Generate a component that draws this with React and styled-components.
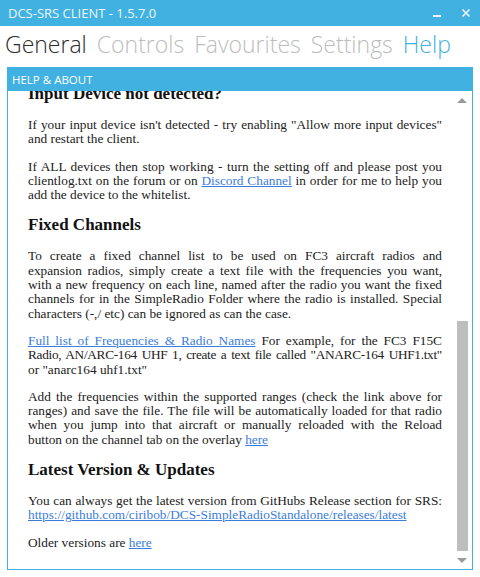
import { useLayoutEffect, useRef } from "react";
import styled, { createGlobalStyle } from "styled-components";

const ACCENT = "#41b1e1";

const GlobalStyle = createGlobalStyle`
  html, body {
    margin: 0;
    padding: 0;
    background: #fff;
  }
  * {
    box-sizing: border-box;
  }
`;

export default function App() {
  const viewRef = useRef(null);

  useLayoutEffect(() => {
    if (viewRef.current) viewRef.current.scrollTop = 17;
  }, []);

  return (
    <Window>
      <GlobalStyle />
      <TitleBar>
        <Title>DCS-SRS CLIENT - 1.5.7.0</Title>
        <WinButtons>
          <WinButton aria-label="minimize">
            <svg width="10" height="10" viewBox="0 0 10 10">
              <rect x="1" y="7" width="8" height="2" fill="#fff" />
            </svg>
          </WinButton>
          <WinButton aria-label="close">
            <svg width="10" height="10" viewBox="0 0 10 10">
              <path d="M1.5 1.5 L8.5 8.5 M8.5 1.5 L1.5 8.5" stroke="#fff" strokeWidth="1.6" />
            </svg>
          </WinButton>
        </WinButtons>
      </TitleBar>

      <Tabs>
        <Tab $state="active">General</Tab>
        <Tab>Controls</Tab>
        <Tab>Favourites</Tab>
        <Tab>Settings</Tab>
        <Tab $state="hover">Help</Tab>
      </Tabs>

      <Panel>
        <PanelHeader>HELP &amp; ABOUT</PanelHeader>
        <PanelBody>
          <Viewport ref={viewRef}>
            <Doc>
              <H>Input Device not detected?</H>
              <P>
                If your input device isn't detected - try enabling "Allow more input devices" and
                restart the client.
              </P>
              <P>
                If ALL devices then stop working - turn the setting off and please post you
                clientlog.txt on the forum or on <A>Discord Channel</A> in order for me to help you
                add the device to the whitelist.
              </P>

              <H>Fixed Channels</H>
              <P>
                <Line>To create a fixed channel list to be used on FC3 aircraft radios and</Line>
                <Line>expansion radios, simply create a text file with the frequencies you want,</Line>
                <Line>with a new frequency on each line, named after the radio you want the fixed</Line>
                <Line>channels for in the SimpleRadio Folder where the radio is installed. Special</Line>
                characters (-,/ etc) can be ignored as can the case.
              </P>
              <P>
                <Line>
                  <A>Full list of Frequencies &amp; Radio Names</A> For example, for the FC3 F15C
                </Line>
                <Line $squeeze>
                  Radio, AN/ARC-164 UHF 1, create a text file called "ANARC-164 UHF1.txt"
                </Line>
                or "anarc164 uhf1.txt"
              </P>
              <P>
                <Line>Add the frequencies within the supported ranges (check the link above for</Line>
                <Line>ranges) and save the file. The file will be automatically loaded for that radio</Line>
                <Line>when you jump into that aircraft or manually reloaded with the Reload</Line>
                button on the channel tab on the overlay <A>here</A>
              </P>

              <H>Latest Version &amp; Updates</H>
              <P>
                You can always get the latest version from GitHubs Release section for SRS:{" "}
                <A $nowrap>https://github.com/ciribob/DCS-SimpleRadioStandalone/releases/latest</A>
              </P>
              <P>
                Older versions are <A>here</A>
              </P>
            </Doc>
          </Viewport>

          <ScrollBar>
            <Arrow $dir="up" />
            <Track>
              <TrackGap style={{ flexGrow: 212 }} />
              <Thumb style={{ flexGrow: 231 }} />
            </Track>
            <Arrow $dir="down" />
          </ScrollBar>
        </PanelBody>
      </Panel>
    </Window>
  );
}

const Window = styled.div`
  width: 480px;
  height: 577px;
  display: flex;
  flex-direction: column;
  background: #fff;
  overflow: hidden;
`;

const TitleBar = styled.div`
  height: 26px;
  flex-shrink: 0;
  display: flex;
  align-items: center;
  justify-content: space-between;
  background: ${ACCENT};
  padding: 0 0 0 8px;
`;

const Title = styled.div`
  font-family: "Open Sans", "Noto Sans", sans-serif;
  font-size: 13px;
  color: #eaf6fc;
`;

const WinButtons = styled.div`
  display: flex;
  height: 100%;
`;

const WinButton = styled.div`
  width: 29px;
  height: 100%;
  display: flex;
  align-items: center;
  justify-content: center;
  opacity: 0.9;
`;

const Tabs = styled.div`
  display: flex;
  gap: 10px;
  padding: 2px 0 0 5px;
  height: 41px;
  flex-shrink: 0;
`;

const Tab = styled.div`
  font-family: "Open Sans", "Noto Sans", sans-serif;
  font-weight: 300;
  font-size: 23px;
  line-height: 32px;
  color: ${({ $state }) =>
    $state === "active" ? "#2b2b2b" : $state === "hover" ? ACCENT : "#bdbdbd"};
`;

const Panel = styled.div`
  margin: 0 7px 7px 7px;
  height: 503px;
  border: 1px solid ${ACCENT};
  display: flex;
  flex-direction: column;
`;

const PanelHeader = styled.div`
  height: 23px;
  flex-shrink: 0;
  background: ${ACCENT};
  color: #fff;
  font-family: "Open Sans", "Noto Sans", sans-serif;
  font-size: 11.5px;
  line-height: 23px;
  padding-left: 4px;
`;

const PanelBody = styled.div`
  flex: 1;
  min-height: 0;
  display: flex;
`;

const Viewport = styled.div`
  flex: 1;
  min-width: 0;
  overflow: hidden;
`;

const Doc = styled.div`
  padding: 10px 12px 20px 20px;
  font-family: "Liberation Serif", "DejaVu Serif", serif;
  font-size: 13.3px;
  line-height: 14.3px;
  color: #222;
  text-align: justify;
`;

const H = styled.h3`
  margin: 13px 0 14px;
  font-size: 17px;
  line-height: 20px;
  font-weight: bold;
  color: #111;
  text-align: left;

  &:first-child {
    margin-top: 0;
  }
`;

const P = styled.p`
  margin: 0 0 13px;
`;

/* a full, justified line of a wrapped paragraph */
const Line = styled.span`
  display: block;
  text-align: justify;
  text-align-last: justify;
  letter-spacing: ${({ $squeeze }) => ($squeeze ? "-0.3px" : "normal")};
`;

const A = styled.a`
  color: #3b7ddd;
  text-decoration: underline;
  cursor: pointer;
  white-space: ${({ $nowrap }) => ($nowrap ? "nowrap" : "normal")};
`;

const ScrollBar = styled.div`
  width: 18px;
  flex-shrink: 0;
  display: flex;
  flex-direction: column;
  align-items: center;
  padding-right: 2px;
`;

const Arrow = styled.div`
  height: 18px;
  width: 100%;
  display: flex;
  align-items: center;
  justify-content: center;
  flex-shrink: 0;

  &::before {
    content: "";
    width: 0;
    height: 0;
    border-left: 5px solid transparent;
    border-right: 5px solid transparent;
    ${({ $dir }) =>
      $dir === "up" ? "border-bottom: 5px solid #9a9a9a;" : "border-top: 5px solid #9a9a9a;"}
  }
`;

const Track = styled.div`
  flex: 1;
  min-height: 0;
  display: flex;
  flex-direction: column;
  width: 11px;
`;

const TrackGap = styled.div`
  flex-basis: 0;
`;

const Thumb = styled.div`
  flex-basis: 0;
  background: #bebebe;
`;
